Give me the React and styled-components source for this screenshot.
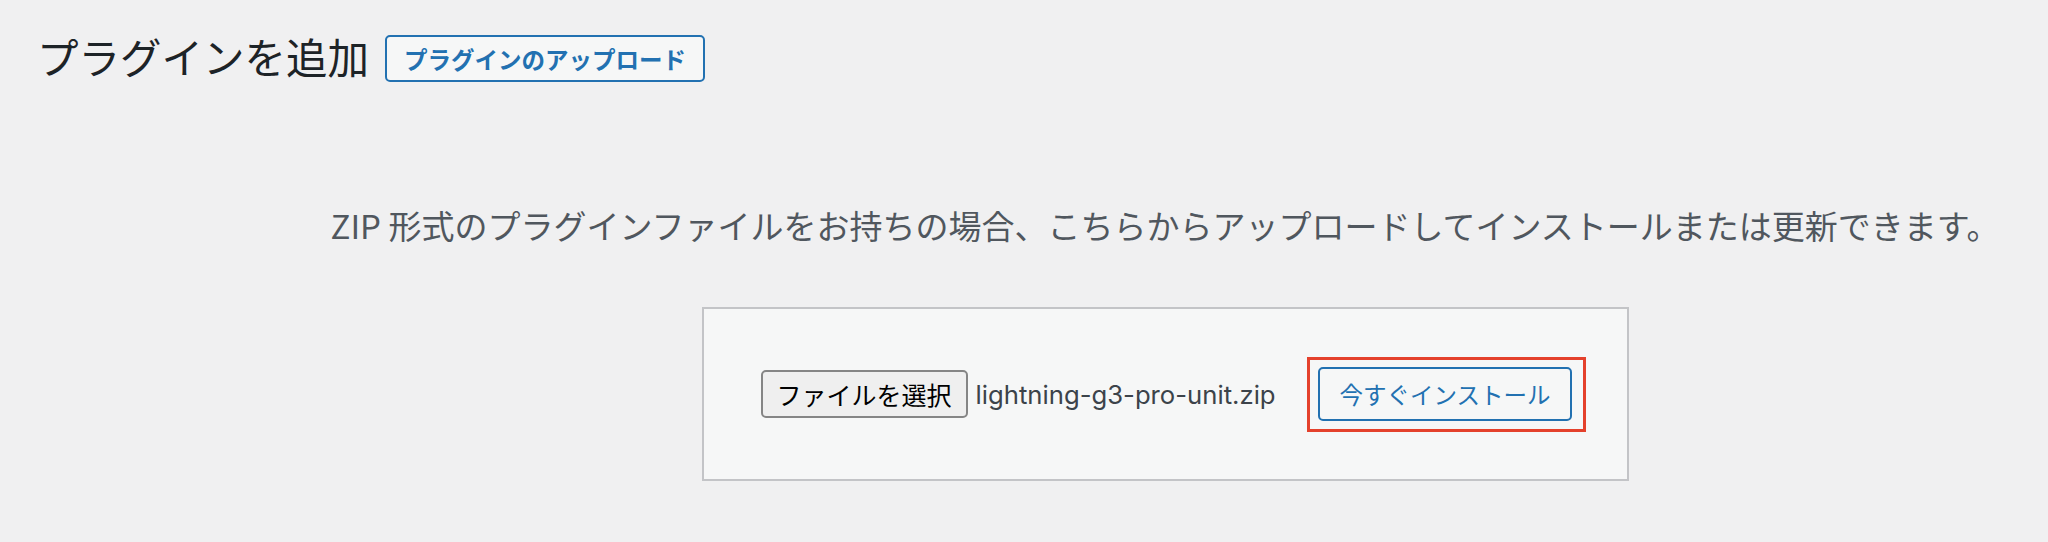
import React from "react";
import styled, { createGlobalStyle } from "styled-components";

const GlobalStyle = createGlobalStyle`
  html, body {
    margin: 0;
    padding: 0;
    background: #f0f0f1;
  }
  body {
    font-family: "Noto Sans CJK JP", "Noto Sans", sans-serif;
  }
`;

const Wrap = styled.div`
  box-sizing: border-box;
  width: 2048px;
  padding: 30px 0 0 37px;
`;

const Header = styled.div`
  display: flex;
  align-items: center;
  gap: 16px;
`;

const Title = styled.h1`
  margin: 0;
  font-size: 41.5px;
  font-weight: 400;
  line-height: 53px;
  color: #1d2327;
`;

const OutlineButton = styled.button`
  box-sizing: border-box;
  display: inline-flex;
  align-items: center;
  justify-content: center;
  height: ${(p) => p.$h}px;
  padding: 0 ${(p) => p.$px}px;
  margin-top: ${(p) => p.$mt || 0}px;
  border: 2px solid #2271b1;
  border-radius: 5px;
  background: #f6f7f7;
  color: #2271b1;
  font-family: "Noto Sans CJK JP", sans-serif;
  font-size: 23.5px;
  font-weight: ${(p) => (p.$bold ? 700 : 400)};
  white-space: nowrap;
`;

const Marker = styled.span`
  display: inline-flex;
  padding: 7px 11px 8px 8px;
  margin: -10px -14px -11px -11px;
  border: 3px solid #e4412c;
`;

const Upload = styled.div`
  padding-left: 245px;
  text-align: center;
`;

const Help = styled.p`
  margin: 118px 0 0;
  font-size: 33px;
  line-height: 48px;
  color: #50575e;
  white-space: nowrap;
`;

const Form = styled.div`
  box-sizing: border-box;
  display: inline-flex;
  justify-content: space-between;
  align-items: center;
  width: 927px;
  height: 174px;
  margin-top: 58px;
  padding: 0 55px 0 57px;
  background: #f6f7f7;
  border: 2px solid #c3c4c7;
`;

const FileControl = styled.div`
  display: flex;
  align-items: center;
  gap: 8px;
`;

const FileButton = styled.button`
  box-sizing: border-box;
  height: 48px;
  padding: 0 14px;
  border: 2px solid #858585;
  border-radius: 5px;
  background: #efefef;
  color: #000;
  font-family: "Noto Sans CJK JP", sans-serif;
  font-size: 25px;
  white-space: nowrap;
`;

const FileName = styled.span`
  font-family: Inter, "Noto Sans", sans-serif;
  font-size: 25.7px;
  color: #3c434a;
`;

export default function App() {
  return (
    <>
      <GlobalStyle />
      <Wrap>
        <Header>
          <Title>プラグインを追加</Title>
          <OutlineButton $h={47} $px={17} $mt={4} $bold>
            プラグインのアップロード
          </OutlineButton>
        </Header>
        <Upload>
          <Help>
            ZIP 形式のプラグインファイルをお持ちの場合、こちらからアップロードしてインストールまたは更新できます。
          </Help>
          <Form>
            <FileControl>
              <FileButton>ファイルを選択</FileButton>
              <FileName>lightning-g3-pro-unit.zip</FileName>
            </FileControl>
            <Marker>
              <OutlineButton $h={54} $px={19}>
                今すぐインストール
              </OutlineButton>
            </Marker>
          </Form>
        </Upload>
      </Wrap>
    </>
  );
}
